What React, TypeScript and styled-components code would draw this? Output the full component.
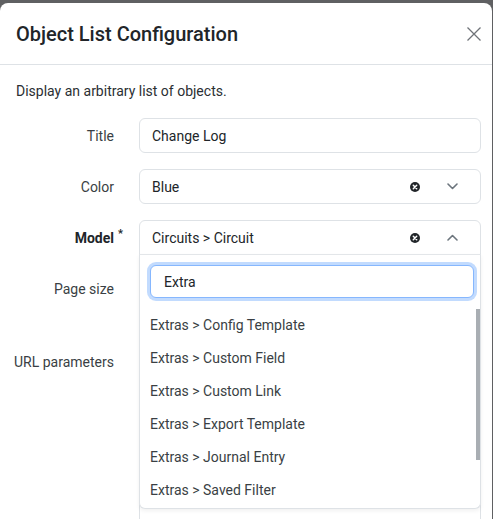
import React from 'react';
import styled, { createGlobalStyle } from 'styled-components';

const GlobalStyle = createGlobalStyle`
  html, body {
    margin: 0;
    padding: 0;
    background: #5f6062;
  }
  body {
    font-family: Roboto, "Noto Sans", "Liberation Sans", sans-serif;
    font-size: 14px;
    color: #212529;
    overflow: hidden;
  }
`;

const Page = styled.div`
  height: 519px;
  overflow: hidden;
  padding-top: 3px;
  padding-right: 1px;
  box-sizing: border-box;
`;

const Modal = styled.div`
  background: #fff;
  border-radius: 8px 8px 0 0;
  height: 100%;
`;

const Header = styled.div`
  height: 61px;
  display: flex;
  align-items: center;
  justify-content: space-between;
  padding: 0 11px 0 16px;
  border-bottom: 1px solid #dee2e6;
`;

const Title = styled.h5`
  margin: 0;
  font-size: 20px;
  font-weight: 500;
  color: #212529;
`;

const CloseButton = styled.button`
  width: 14px;
  height: 14px;
  padding: 0;
  border: none;
  background: none;
  display: flex;
  color: #6f7378;
  cursor: pointer;
`;

const Body = styled.div`
  padding: 16px 11px 0 16px;
`;

const Lead = styled.p`
  margin: 0 0 16px;
  line-height: 21px;
  color: #2b2f33;
`;

const Row = styled.div<{ $top?: boolean }>`
  display: grid;
  grid-template-columns: 98px 1fr;
  column-gap: 25px;
  align-items: ${(p) => (p.$top ? 'start' : 'center')};
  margin-bottom: 16px;
  position: relative;
`;

const Label = styled.label<{ $required?: boolean; $offset?: number }>`
  display: flex;
  justify-content: flex-end;
  white-space: nowrap;
  line-height: 21px;
  padding-top: ${(p) => (p.$offset ?? 0) + 1}px;
  color: #3a3f44;
  font-weight: ${(p) => (p.$required ? 700 : 400)};
  position: relative;

  ${(p) =>
    p.$required &&
    `
    color: #212529;
    &::after {
      content: '*';
      position: absolute;
      right: -9px;
      top: -4px;
      font-size: 11px;
      font-weight: 700;
    }
  `}
`;

const Input = styled.input`
  box-sizing: border-box;
  width: 100%;
  height: 35px;
  padding: 0 12px;
  border: 1px solid #dee2e6;
  border-radius: 6px;
  font: inherit;
  color: #212529;
  outline: none;
`;

const TextArea = styled.textarea`
  box-sizing: border-box;
  width: 100%;
  height: 240px;
  border: 1px solid #dee2e6;
  border-radius: 6px;
  resize: none;
`;

const Control = styled.div<{ $open?: boolean }>`
  box-sizing: border-box;
  height: 35px;
  display: flex;
  align-items: center;
  padding: 0 0 0 12px;
  border: 1px solid #dee2e6;
  border-radius: ${(p) => (p.$open ? '6px 6px 0 0' : '6px')};
  background: #fff;
`;

const Value = styled.span`
  flex: 1;
  color: #212529;
`;

const ClearIcon = styled.span`
  width: 10px;
  height: 10px;
  display: flex;
  margin-right: 27px;
`;

const Chevron = styled.span`
  width: 11px;
  height: 7px;
  display: flex;
  margin-right: 22px;
  color: #6c757d;
`;

const SelectWrap = styled.div`
  position: relative;
`;

const Menu = styled.div`
  position: absolute;
  left: 0;
  right: 0;
  top: 34px;
  z-index: 10;
  background: #fff;
  border: 1px solid #dee2e6;
  border-top-color: #e3e6e9;
  border-radius: 0 0 6px 6px;
  box-shadow: 0 2px 4px rgba(0, 0, 0, 0.06);
  padding-top: 10px;
`;

const Search = styled.input`
  box-sizing: border-box;
  display: block;
  width: calc(100% - 16px);
  height: 33px;
  margin: 0 6px 0 10px;
  padding: 0 13px;
  border: 1px solid #86b7fe;
  border-radius: 6px;
  box-shadow: 0 0 0 3px rgba(13, 110, 253, 0.25);
  font: inherit;
  color: #212529;
  outline: none;
`;

const ListBox = styled.div`
  position: relative;
  margin: 11px 0 1px;
`;

const List = styled.ul`
  list-style: none;
  margin: 0;
  padding: 0;
`;

const ScrollThumb = styled.div`
  position: absolute;
  top: 0;
  right: 0;
  width: 4px;
  height: 151px;
  background: #a9aeb3;
`;

const Option = styled.li`
  padding: 6px 10px;
  line-height: 21px;
  color: #3a3f44;
  cursor: pointer;
`;

const Clear = () => (
  <ClearIcon>
    <svg width="10" height="10" viewBox="0 0 10 10">
      <circle cx="5" cy="5" r="5" fill="#212529" />
      <path d="M3.3 3.3 6.7 6.7M6.7 3.3 3.3 6.7" stroke="#fff" strokeWidth="1.5" strokeLinecap="round" />
    </svg>
  </ClearIcon>
);

const Arrow = ({ up }: { up?: boolean }) => (
  <Chevron>
    <svg width="11" height="7" viewBox="0 0 11 7" fill="none" stroke="currentColor" strokeWidth="1.6" strokeLinecap="round" strokeLinejoin="round">
      <path d={up ? 'M1 6 5.5 1.5 10 6' : 'M1 1 5.5 5.5 10 1'} />
    </svg>
  </Chevron>
);

const options = [
  'Extras > Config Template',
  'Extras > Custom Field',
  'Extras > Custom Link',
  'Extras > Export Template',
  'Extras > Journal Entry',
  'Extras > Saved Filter',
];

const App: React.FC = () => {
  return (
    <>
      <GlobalStyle />
      <Page>
        <Modal>
          <Header>
            <Title>Object List Configuration</Title>
            <CloseButton aria-label="Close">
              <svg width="14" height="14" viewBox="0 0 14 14" stroke="currentColor" strokeWidth="1.3">
                <path d="M0.5 0.5 13.5 13.5M13.5 0.5 0.5 13.5" />
              </svg>
            </CloseButton>
          </Header>
          <Body>
            <Lead>Display an arbitrary list of objects.</Lead>
            <Row>
              <Label>Title</Label>
              <Input defaultValue="Change Log" />
            </Row>
            <Row>
              <Label>Color</Label>
              <Control>
                <Value>Blue</Value>
                <Clear />
                <Arrow />
              </Control>
            </Row>
            <Row>
              <Label $required>Model</Label>
              <SelectWrap>
                <Control $open>
                  <Value>Circuits &gt; Circuit</Value>
                  <Clear />
                  <Arrow up />
                </Control>
                <Menu>
                  <Search defaultValue="Extra" />
                  <ListBox>
                    <List>
                      {options.map((o) => (
                        <Option key={o}>{o}</Option>
                      ))}
                    </List>
                    <ScrollThumb />
                  </ListBox>
                </Menu>
              </SelectWrap>
            </Row>
            <Row>
              <Label>Page size</Label>
              <Input />
            </Row>
            <Row $top>
              <Label $offset={29}>URL parameters</Label>
              <TextArea />
            </Row>
          </Body>
        </Modal>
      </Page>
    </>
  );
};

export default App;
